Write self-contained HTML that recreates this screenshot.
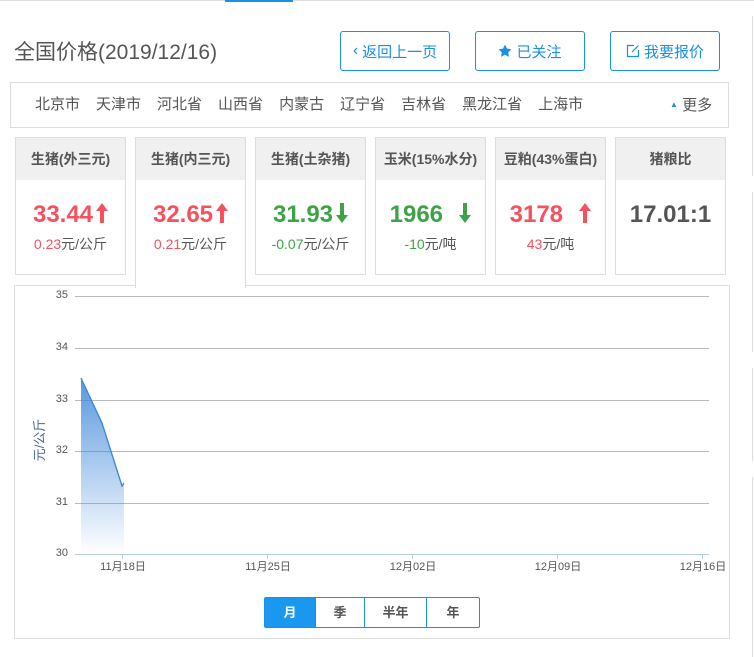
<!DOCTYPE html>
<html><head><meta charset="utf-8"><style>
*{margin:0;padding:0;box-sizing:border-box}
body{width:754px;height:650px;background:#fff;position:relative;overflow:hidden;font-family:"Liberation Sans","Noto Sans CJK SC",sans-serif;color:#555}
.abs{position:absolute}
.btn{position:absolute;top:31px;height:40px;width:110px;border:1px solid #1a8fe6;border-radius:3px;color:#1a8fe6;font-size:15px;display:flex;align-items:center;justify-content:center;gap:4px}
.card{position:absolute;top:137px;width:111px;height:138px;border:1px solid #ddd;background:#fff;text-align:center}
.card .h{height:42px;background:#f0f0f0;font-size:14px;font-weight:bold;line-height:42px;color:#555}
.card .v{font-size:24px;font-weight:bold;margin-top:20px;line-height:30px}
.card .s{font-size:14px;margin-top:4px;color:#555}
.r{color:#f5515f}.g{color:#3ea346}
.reg span{margin-right:16px}
.yl{position:absolute;left:40px;font-size:11px;color:#555;width:28px;text-align:right}
.xl{position:absolute;top:558px;font-size:11px;color:#555;width:60px;text-align:center}
svg.ar{vertical-align:-1px;margin-left:3px}
</style></head><body>
<div class="abs" style="left:0;top:0;width:754px;height:1px;background:#ddd"></div>
<div class="abs" style="left:225px;top:0;width:68px;height:2px;background:#1a8fe6"></div>
<div class="abs" style="left:752px;top:16px;width:2px;height:160px;border-left:1px solid #ddd"></div>
<div class="abs" style="left:752px;top:192px;width:2px;height:160px;border-left:1px solid #ddd"></div>
<div class="abs" style="left:752px;top:368px;width:2px;height:93px;border-left:1px solid #ddd"></div>
<div class="abs" style="left:752px;top:477px;width:2px;height:180px;border-left:1px solid #ddd"></div>
<div class="abs" style="left:14px;top:36px;font-size:21px;color:#555">全国价格(2019/12/16)</div>
<div class="btn" style="left:340px"><span style="font-size:16px">&lsaquo;</span>返回上一页</div>
<div class="btn" style="left:475px"><svg width="14" height="14" viewBox="0 0 24 24"><path d="M12 1l3.4 7 7.6 1-5.5 5.3 1.3 7.7L12 18.3 5.2 22l1.3-7.7L1 9l7.6-1z" fill="#1a8fe6"/></svg>已关注</div>
<div class="btn" style="left:610px"><svg width="14" height="14" viewBox="0 0 14 14"><path d="M8 1.5H1.5v11h11V6M6 8l6.5-6.5" fill="none" stroke="#1a8fe6" stroke-width="1.2"/></svg>我要报价</div>
<div class="abs reg" style="left:10px;top:82px;width:719px;height:46px;border:1px solid #ddd;font-size:15px;line-height:44px;padding-left:24px;white-space:nowrap;color:#555"><span>北京市</span><span>天津市</span><span>河北省</span><span>山西省</span><span>内蒙古</span><span>辽宁省</span><span>吉林省</span><span>黑龙江省</span><span>上海市</span></div>
<div class="abs" style="left:670px;top:82px;line-height:46px;font-size:15px;color:#555"><span style="color:#1a8fe6;font-size:8px;vertical-align:3px">▲</span> 更多</div>
<div class="abs" style="left:14px;top:285px;width:716px;height:354px;border:1px solid #ddd"></div>
<div class="card" style="left:15px"><div class="h">生猪(外三元)</div><div class="v r">33.44<svg class="ar" width="12" height="20" viewBox="0 0 12 20"><path d="M6 0L12 8H8V20H4V8H0Z" fill="#f5515f"/></svg></div><div class="s"><span class="r">0.23</span>元/公斤</div></div>
<div class="card" style="left:135px;height:151px;border-bottom:none;z-index:2"><div class="h">生猪(内三元)</div><div class="v r">32.65<svg class="ar" width="12" height="20" viewBox="0 0 12 20"><path d="M6 0L12 8H8V20H4V8H0Z" fill="#f5515f"/></svg></div><div class="s"><span class="r">0.21</span>元/公斤</div></div>
<div class="card" style="left:255px"><div class="h">生猪(土杂猪)</div><div class="v g">31.93<svg class="ar" width="12" height="20" viewBox="0 0 12 20"><path d="M6 20L12 12H8V0H4V12H0Z" fill="#3ea346"/></svg></div><div class="s"><span class="g">-0.07</span>元/公斤</div></div>
<div class="card" style="left:375px"><div class="h">玉米(15%水分)</div><div class="v g">1966 &nbsp;<svg class="ar" width="12" height="20" viewBox="0 0 12 20"><path d="M6 20L12 12H8V0H4V12H0Z" fill="#3ea346"/></svg></div><div class="s"><span class="g">-10</span>元/吨</div></div>
<div class="card" style="left:495px"><div class="h">豆粕(43%蛋白)</div><div class="v r">3178 &nbsp;<svg class="ar" width="12" height="20" viewBox="0 0 12 20"><path d="M6 0L12 8H8V20H4V8H0Z" fill="#f5515f"/></svg></div><div class="s"><span class="r">43</span>元/吨</div></div>
<div class="card" style="left:615px"><div class="h">猪粮比</div><div class="v" style="color:#555">17.01:1</div></div>
<svg class="abs" style="left:0;top:0" width="754" height="650">
<defs><linearGradient id="gr" x1="0" y1="0" x2="0" y2="1"><stop offset="0" stop-color="#3b86d9" stop-opacity=".85"/><stop offset="1" stop-color="#3b86d9" stop-opacity="0"/></linearGradient></defs>
<g stroke="#bbb" stroke-width="1">
<line x1="75" y1="296.5" x2="709" y2="296.5"/><line x1="75" y1="348.5" x2="709" y2="348.5"/><line x1="75" y1="400.5" x2="709" y2="400.5"/><line x1="75" y1="451.5" x2="709" y2="451.5"/><line x1="75" y1="503.5" x2="709" y2="503.5"/></g>
<g stroke="#b8cde0"><line x1="75" y1="554.5" x2="709" y2="554.5"/><line x1="122.5" y1="554" x2="122.5" y2="559"/><line x1="267.5" y1="554" x2="267.5" y2="559"/><line x1="412.5" y1="554" x2="412.5" y2="559"/><line x1="557.5" y1="554" x2="557.5" y2="559"/><line x1="702.5" y1="554" x2="702.5" y2="559"/></g>
<path d="M81 378L102 423L122 486L124 483L124 554L81 554Z" fill="url(#gr)"/>
<path d="M81 378L102 423L122 486L124 483" fill="none" stroke="#3b86d9" stroke-width="1.3"/>
<text x="44" y="440" transform="rotate(-90 44 440)" font-size="13" fill="#4a6a90" text-anchor="middle" font-family="Liberation Sans,Noto Sans CJK SC,sans-serif">元/公斤</text>
</svg>
<div class="yl" style="top:289px">35</div><div class="yl" style="top:341px">34</div><div class="yl" style="top:393px">33</div><div class="yl" style="top:444px">32</div><div class="yl" style="top:496px">31</div><div class="yl" style="top:547px">30</div>
<div class="xl" style="left:93px">11月18日</div><div class="xl" style="left:238px">11月25日</div><div class="xl" style="left:383px">12月02日</div><div class="xl" style="left:528px">12月09日</div><div class="xl" style="left:673px">12月16日</div>
<div class="abs" style="left:264px;top:597px;height:31px;width:216px;border:1px solid #1a8fe6;border-radius:2px;display:flex;font-size:13px;font-weight:bold;line-height:29px;text-align:center;color:#555">
<div style="width:50px;background:#1a97ee;color:#fff">月</div><div style="width:49px;border-left:1px solid #1a8fe6">季</div><div style="width:62px;border-left:1px solid #1a8fe6">半年</div><div style="width:53px;border-left:1px solid #1a8fe6">年</div></div>
</body></html>
